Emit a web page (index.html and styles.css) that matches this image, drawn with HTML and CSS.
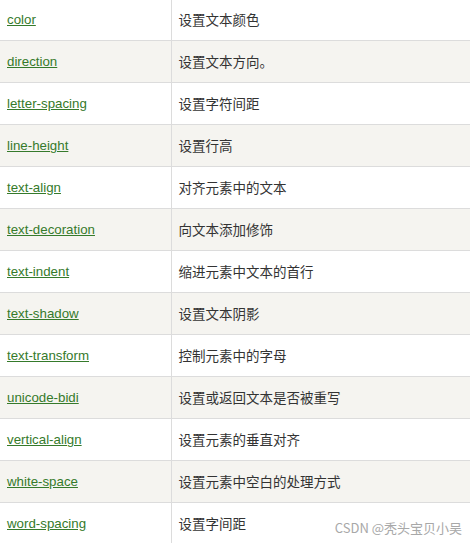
FILE: index.html
```html
<!DOCTYPE html>
<html lang="zh">
<head>
<meta charset="utf-8">
<link rel="stylesheet" href="styles.css">
</head>
<body>
<div class="wrap">
<table class="props">
<tbody>
<tr><td class="prop"><a href="#">color</a></td><td class="desc">设置文本颜色</td></tr>
<tr><td class="prop"><a href="#">direction</a></td><td class="desc">设置文本方向。</td></tr>
<tr><td class="prop"><a href="#">letter-spacing</a></td><td class="desc">设置字符间距</td></tr>
<tr><td class="prop"><a href="#">line-height</a></td><td class="desc">设置行高</td></tr>
<tr><td class="prop"><a href="#">text-align</a></td><td class="desc">对齐元素中的文本</td></tr>
<tr><td class="prop"><a href="#">text-decoration</a></td><td class="desc">向文本添加修饰</td></tr>
<tr><td class="prop"><a href="#">text-indent</a></td><td class="desc">缩进元素中文本的首行</td></tr>
<tr><td class="prop"><a href="#">text-shadow</a></td><td class="desc">设置文本阴影</td></tr>
<tr><td class="prop"><a href="#">text-transform</a></td><td class="desc">控制元素中的字母</td></tr>
<tr><td class="prop"><a href="#">unicode-bidi</a></td><td class="desc">设置或返回文本是否被重写</td></tr>
<tr><td class="prop"><a href="#">vertical-align</a></td><td class="desc">设置元素的垂直对齐</td></tr>
<tr><td class="prop"><a href="#">white-space</a></td><td class="desc">设置元素中空白的处理方式</td></tr>
<tr><td class="prop"><a href="#">word-spacing</a></td><td class="desc">设置字间距</td></tr>
</tbody>
</table>
<div class="mark">CSDN @秃头宝贝小吴</div>
</div>
</body>
</html>
```
FILE: styles.css
```css
html, body {
  margin: 0;
  padding: 0;
  background: #fff;
}
body {
  font-family: "Liberation Sans", Arial, "Noto Sans CJK SC", sans-serif;
  font-size: 13.3px;
  color: #333;
  overflow: hidden;
}
.wrap {
  position: relative;
  width: 474px;
  height: 543px;
  overflow: hidden;
}
.props {
  border-collapse: collapse;
  width: 470px;
  margin-top: -2px;
  table-layout: fixed;
}
.props tr {
  height: 42px;
}
.props tr:nth-child(even) {
  background: #f5f4f0;
}
.props td {
  border-bottom: 1px solid #dcdcdc;
  padding: 0 7px;
  vertical-align: middle;
  line-height: 20px;
  box-sizing: border-box;
}
.props td.prop {
  width: 171px;
  padding-top: 2px;
  border-right: 1px solid #dcdcdc;
}
.props a {
  color: #357a2b;
  text-decoration: underline;
}
.desc {
  font-family: "Noto Sans CJK SC", sans-serif;
  font-size: 13.5px;
  color: #333;
}
.mark {
  position: absolute;
  right: 12px;
  bottom: 6px;
  font-family: "Noto Sans CJK SC", sans-serif;
  font-size: 13px;
  color: #a8a8a8;
}
```
